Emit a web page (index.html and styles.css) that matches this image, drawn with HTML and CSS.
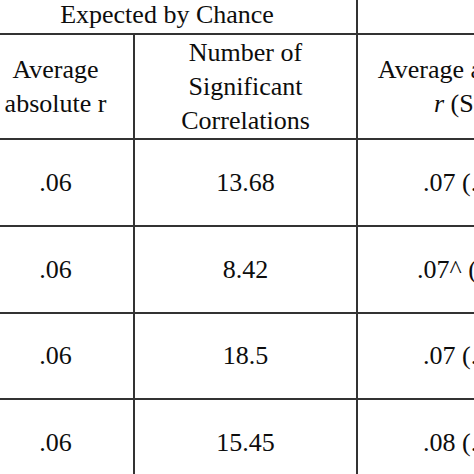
FILE: index.html
```html
<!DOCTYPE html>
<html>
<head>
<meta charset="utf-8">
<link rel="stylesheet" href="styles.css">
</head>
<body>
<div class="table">
  <div class="cell head span2"><span class="txt">Expected by Chance</span></div>
  <div class="cell head"></div>

  <div class="cell"><span class="txt">Average<br>absolute r</span></div>
  <div class="cell"><span class="txt">Number of<br>Significant<br>Correlations</span></div>
  <div class="cell"><span class="txt">Average absolute<br><i>r</i> (SD)</span></div>

  <div class="cell"><span class="txt">.06</span></div>
  <div class="cell"><span class="txt">13.68</span></div>
  <div class="cell"><span class="txt">.07 (.02)</span></div>

  <div class="cell"><span class="txt">.06</span></div>
  <div class="cell"><span class="txt">8.42</span></div>
  <div class="cell"><span class="txt">.07^ (.03)</span></div>

  <div class="cell"><span class="txt">.06</span></div>
  <div class="cell"><span class="txt">18.5</span></div>
  <div class="cell"><span class="txt">.07 (.03)</span></div>

  <div class="cell"><span class="txt">.06</span></div>
  <div class="cell"><span class="txt">15.45</span></div>
  <div class="cell"><span class="txt">.08 (.04)</span></div>
</div>
</body>
</html>
```

FILE: styles.css
```css
html, body {
  margin: 0;
  padding: 0;
  overflow: hidden;
  background: #ffffff;
}

body {
  width: 474px;
  height: 474px;
  font-family: "Liberation Serif", "Times New Roman", serif;
  font-size: 26px;
  line-height: 34px;
  color: #0d0d0d;
}

.table {
  display: grid;
  grid-template-columns: 157px 223px 221px;
  grid-template-rows: 43px 105px 87px 87px 86px 87px;
  margin: -8px 0 0 -22px;
  width: 601px;
}

.cell {
  box-sizing: border-box;
  border-right: 2px solid #333333;
  border-bottom: 2px solid #333333;
  display: flex;
  align-items: center;
  justify-content: center;
  text-align: center;
}

.txt {
  display: block;
  white-space: nowrap;
}

.head {
  padding-top: 4px;
}

.span2 {
  grid-column: span 2;
}
```
